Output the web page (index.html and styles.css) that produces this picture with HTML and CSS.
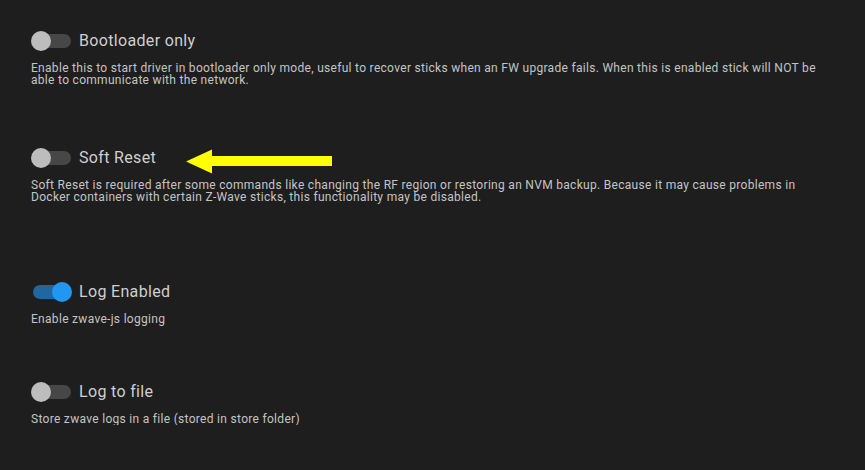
FILE: index.html
```html
<!DOCTYPE html>
<html lang="en">
<head>
<meta charset="utf-8">
<title>Settings</title>
<link rel="stylesheet" href="styles.css">
</head>
<body>
<div class="settings">
  <div class="setting setting-first">
    <div class="row">
      <span class="switch"><span class="track"></span><span class="thumb"></span></span>
      <span class="title">Bootloader only</span>
    </div>
    <div class="desc">Enable this to start driver in bootloader only mode, useful to recover sticks when an FW upgrade fails. When this is enabled stick will NOT be able to communicate with the network.</div>
  </div>
  <div class="setting setting-second">
    <div class="row">
      <span class="switch"><span class="track"></span><span class="thumb"></span></span>
      <span class="title">Soft Reset</span>
    </div>
    <div class="desc">Soft Reset is required after some commands like changing the RF region or restoring an NVM backup. Because it may cause problems in Docker containers with certain Z-Wave sticks, this functionality may be disabled.</div>
    <svg class="arrow" width="150" height="26" viewBox="0 0 150 26" aria-hidden="true">
      <polygon points="0,12.5 26,0.5 26,7 146,7 146,17 26,17 26,24.5" fill="#ffff00"/>
    </svg>
  </div>
  <div class="setting setting-third">
    <div class="row">
      <span class="switch on"><span class="track"></span><span class="thumb"></span></span>
      <span class="title">Log Enabled</span>
    </div>
    <div class="desc">Enable zwave-js logging</div>
  </div>
  <div class="setting setting-fourth">
    <div class="row">
      <span class="switch"><span class="track"></span><span class="thumb"></span></span>
      <span class="title">Log to file</span>
    </div>
    <div class="desc">Store zwave logs in a file (stored in store folder)</div>
  </div>
</div>
</body>
</html>
```

FILE: styles.css
```css
html, body {
  margin: 0;
  padding: 0;
  background: #1e1e1e;
}

body {
  font-family: Roboto, "Liberation Sans", Arial, sans-serif;
  color: #c4c4c4;
}

.settings {
  display: flex;
  flex-direction: column;
  padding: 29px 37px 0 31px;
}

.setting {
  position: relative;
}

.setting-second { margin-top: 60px; }
.setting-third { margin-top: 77px; }
.setting-fourth { margin-top: 55px; }

.row {
  display: flex;
  align-items: center;
  height: 24px;
}

.switch {
  position: relative;
  width: 42px;
  height: 20px;
  margin-right: 6px;
  flex: none;
}

.track {
  position: absolute;
  left: 2px;
  top: 3px;
  width: 38px;
  height: 14px;
  border-radius: 7px;
  background: #474747;
}

.thumb {
  position: absolute;
  left: 0;
  top: 0;
  width: 20px;
  height: 20px;
  border-radius: 50%;
  background: #bdbdbd;
}

.switch.on .track {
  background: #21679f;
}

.switch.on .thumb {
  left: 21px;
  background: #2196f3;
}

.title {
  font-size: 16px;
  line-height: 20px;
  letter-spacing: 0.33px;
  color: #cfcfcf;
}

.desc {
  margin-top: 9px;
  font-size: 12px;
  line-height: 12px;
  letter-spacing: 0.3px;
  color: #c4c4c4;
}

.arrow {
  position: absolute;
  left: 155px;
  top: 3px;
}
```
